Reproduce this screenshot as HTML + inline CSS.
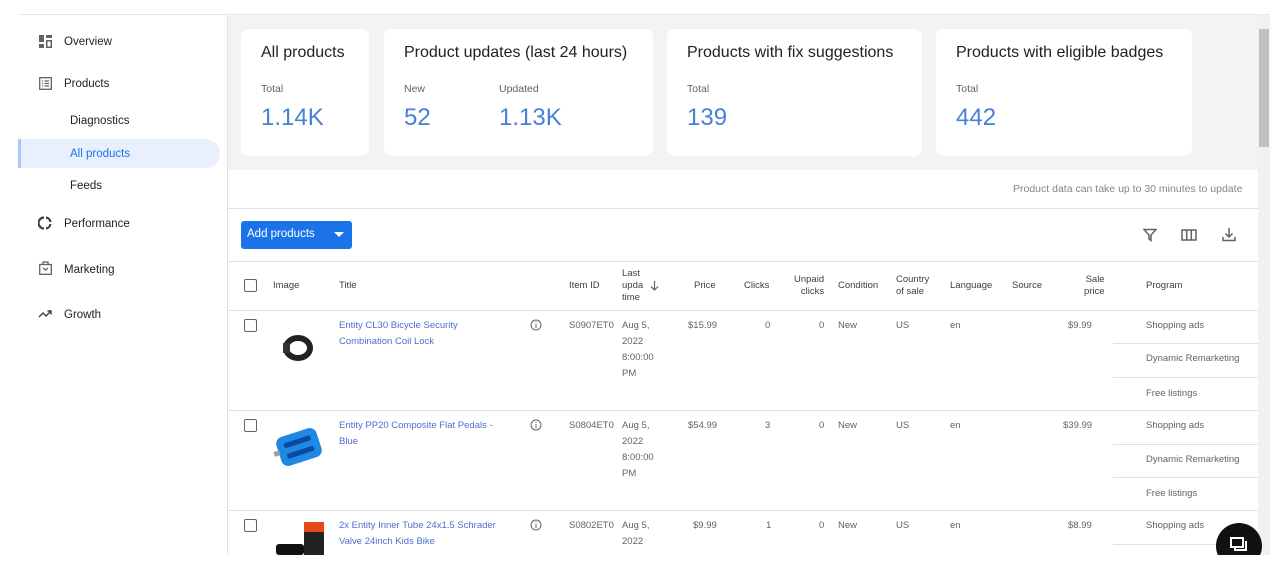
<!DOCTYPE html>
<html><head><style>
*{margin:0;padding:0;box-sizing:border-box}
body{width:1282px;height:575px;background:#fff;font-family:"Liberation Sans",Arial,sans-serif;color:#3c4043;position:relative;overflow:hidden}
.a{position:absolute}
.nav{font-size:11.5px;color:#202124}
.card{position:absolute;top:29px;height:127px;background:#fff;border-radius:8px}
.card .t{position:absolute;left:20px;top:15px;font-size:16px;color:#202124}
.card .l{position:absolute;top:54px;font-size:10.5px;color:#5f6368}
.card .v{position:absolute;top:75px;font-size:24px;color:#4a7fd6}
.th{position:absolute;font-size:9.5px;color:#3c4043;line-height:12px}
.td{position:absolute;font-size:9.5px;color:#5f6368;line-height:16px}
.lk{position:absolute;font-size:9.5px;color:#4c6fcf;line-height:16px}
.cb{position:absolute;left:244px;width:13px;height:13px;border:1.5px solid #5f6368;border-radius:2px}
.hl{position:absolute;height:1px;background:#e0e0e0}
</style></head><body>
<div class="a" style="left:18px;top:14px;width:1252px;height:1px;background:#e8e8e8"></div>
<!-- sidebar -->
<svg class="a" style="left:39px;top:35px" width="13" height="13" viewBox="0 0 13 13" fill="#5f6368"><rect x="0" y="0" width="5" height="7"/><rect x="7" y="0" width="6" height="3"/><rect x="7" y="5" width="6" height="8"/><rect x="0" y="9" width="5" height="4"/><rect x="8.5" y="6.5" width="3" height="5" fill="#fff"/></svg>
<div class="a nav" style="left:64px;top:36px">Overview</div>
<svg class="a" style="left:39px;top:77px" width="13" height="13" viewBox="0 0 13 13" fill="none" stroke="#5f6368" stroke-width="1.3"><rect x="0.7" y="0.7" width="11.6" height="11.6"/><path d="M3 4h1M3 6.5h1M3 9h1M5.5 4h4.5M5.5 6.5h4.5M5.5 9h4.5"/></svg>
<div class="a nav" style="left:64px;top:78px">Products</div>
<div class="a nav" style="left:70px;top:115px">Diagnostics</div>
<div class="a" style="left:18px;top:139px;width:202px;height:29px;background:#e8f0fe;border-radius:0 15px 15px 0;border-left:3px solid #a8c7fa"></div>
<div class="a nav" style="left:70px;top:148px;color:#1a73e8">All products</div>
<div class="a nav" style="left:70px;top:180px">Feeds</div>
<svg class="a" style="left:38px;top:216px" width="14" height="14" viewBox="0 0 14 14" fill="none" stroke="#3c4043" stroke-width="2.2"><path d="M6 1.5A5.5 5.5 0 0 0 6 12.5M8 1.5A5.5 5.5 0 0 1 12.5 6M12.5 8A5.5 5.5 0 0 1 8 12.5"/></svg>
<div class="a nav" style="left:64px;top:218px">Performance</div>
<svg class="a" style="left:39px;top:261px" width="13" height="14" viewBox="0 0 13 14" fill="none" stroke="#5f6368" stroke-width="1.3"><rect x="0.7" y="3.5" width="11.6" height="9.8"/><path d="M4 3.5V1h5v2.5M4 7l2.5 2L9 7"/></svg>
<div class="a nav" style="left:64px;top:264px">Marketing</div>
<svg class="a" style="left:38px;top:309px" width="14" height="10" viewBox="0 0 14 10" fill="none" stroke="#3c4043" stroke-width="1.4"><path d="M1 8l4-4 3 3 5-5M9.5 2H13v3.5"/></svg>
<div class="a nav" style="left:64px;top:309px">Growth</div>
<!-- main -->
<div class="a" style="left:228px;top:15px;width:1030px;height:155px;background:#f1f3f4"></div>
<div class="a" style="left:227px;top:15px;width:1px;height:540px;background:#e0e0e0"></div>
<div class="a" style="left:1258px;top:15px;width:12px;height:540px;background:#f1f1f1"></div>
<div class="a" style="left:1259px;top:29px;width:10px;height:118px;background:#c1c1c1"></div>
<div class="card" style="left:241px;width:128px"><div class="t">All products</div><div class="l" style="left:20px">Total</div><div class="v" style="left:20px">1.14K</div></div>
<div class="card" style="left:384px;width:269px"><div class="t">Product updates (last 24 hours)</div><div class="l" style="left:20px">New</div><div class="v" style="left:20px">52</div><div class="l" style="left:115px">Updated</div><div class="v" style="left:115px">1.13K</div></div>
<div class="card" style="left:667px;width:255px"><div class="t">Products with fix suggestions</div><div class="l" style="left:20px">Total</div><div class="v" style="left:20px">139</div></div>
<div class="card" style="left:936px;width:256px"><div class="t">Products with eligible badges</div><div class="l" style="left:20px">Total</div><div class="v" style="left:20px">442</div></div>
<div class="a" style="left:1013px;top:183px;font-size:10.5px;color:#80868b">Product data can take up to 30 minutes to update</div>
<div class="hl" style="left:228px;top:208px;width:1030px"></div>
<div class="a" style="left:241px;top:221px;width:111px;height:28px;background:#1a73e8;border-radius:3px;color:#fff;font-size:11.5px;padding:7px 0 0 6px">Add products</div>
<svg class="a" style="left:334px;top:232px" width="10" height="6"><path d="M0 0h10L5 5z" fill="#fff"/></svg>
<svg class="a" style="left:1143px;top:228px" width="14" height="14" fill="none" stroke="#5f6368" stroke-width="1.5"><path d="M1 1.5h12L8 7v5.5L6 11V7z"/></svg>
<svg class="a" style="left:1181px;top:229px" width="16" height="12" fill="none" stroke="#5f6368" stroke-width="1.5"><rect x="1" y="1" width="14" height="10"/><path d="M5.7 1v10M10.3 1v10"/></svg>
<svg class="a" style="left:1222px;top:227px" width="14" height="15" fill="none" stroke="#5f6368" stroke-width="1.5"><path d="M7 1v9M3.5 6.5L7 10l3.5-3.5M1 10v3.5h12V10"/></svg>
<div class="hl" style="left:228px;top:261px;width:1030px"></div>
<!-- header -->
<div class="cb" style="top:279px"></div>
<div class="th" style="left:273px;top:280px">Image</div>
<div class="th" style="left:339px;top:280px">Title</div>
<div class="th" style="left:569px;top:280px">Item ID</div>
<div class="th" style="left:622px;top:268px">Last<br>upda<br>time</div>
<svg class="a" style="left:650px;top:281px" width="9" height="10" fill="none" stroke="#5f6368" stroke-width="1.2"><path d="M4.5 0v9M1 5.5l3.5 3.5L8 5.5"/></svg>
<div class="th" style="left:694px;top:280px">Price</div>
<div class="th" style="left:744px;top:280px">Clicks</div>
<div class="th" style="left:794px;top:274px;text-align:right">Unpaid<br>clicks</div>
<div class="th" style="left:838px;top:280px">Condition</div>
<div class="th" style="left:896px;top:274px">Country<br>of sale</div>
<div class="th" style="left:950px;top:280px">Language</div>
<div class="th" style="left:1012px;top:280px">Source</div>
<div class="th" style="left:1084px;top:274px;text-align:right">Sale<br>price</div>
<div class="th" style="left:1146px;top:280px">Program</div>
<div class="hl" style="left:228px;top:310px;width:1030px"></div>
<!-- rows -->
<div class="cb" style="top:319px"></div>
<svg class="a" style="left:280px;top:331px" width="34" height="32"><ellipse cx="18" cy="17" rx="12" ry="10" fill="none" stroke="#222" stroke-width="6"/><rect x="3" y="12" width="7" height="10" fill="#333"/></svg>
<div class="lk" style="left:339px;top:318px">Entity CL30 Bicycle Security<br>Combination Coil Lock</div>
<div class="td" style="left:569px;top:318px">S0907ET0</div>
<div class="td" style="left:622px;top:318px">Aug 5,<br>2022<br>8:00:00<br>PM</div>
<div class="td" style="left:688px;top:318px">$15.99</div>
<div class="td" style="left:765px;top:318px">0</div>
<div class="td" style="left:819px;top:318px">0</div>
<div class="td" style="left:838px;top:318px">New</div>
<div class="td" style="left:896px;top:318px">US</div>
<div class="td" style="left:950px;top:318px">en</div>
<div class="td" style="left:1068px;top:318px">$9.99</div>
<div class="td" style="left:1146px;top:318px">Shopping ads</div>
<div class="hl" style="left:1113px;top:343px;width:145px"></div>
<div class="td" style="left:1146px;top:351px">Dynamic Remarketing</div>
<div class="hl" style="left:1113px;top:377px;width:145px"></div>
<div class="td" style="left:1146px;top:386px">Free listings</div>
<div class="hl" style="left:228px;top:410px;width:1030px"></div>

<div class="cb" style="top:419px"></div>
<svg class="a" style="left:273px;top:424px" width="52" height="46"><g transform="rotate(-18 26 23)"><rect x="5" y="8" width="42" height="30" rx="7" fill="#1e88e5"/><rect x="12" y="15" width="28" height="5" rx="2" fill="#0d47a1"/><rect x="12" y="26" width="28" height="5" rx="2" fill="#0d47a1"/><rect x="0" y="20" width="6" height="5" fill="#9e9e9e"/></g></svg>
<div class="lk" style="left:339px;top:418px">Entity PP20 Composite Flat Pedals -<br>Blue</div>
<div class="td" style="left:569px;top:418px">S0804ET0</div>
<div class="td" style="left:622px;top:418px">Aug 5,<br>2022<br>8:00:00<br>PM</div>
<div class="td" style="left:688px;top:418px">$54.99</div>
<div class="td" style="left:765px;top:418px">3</div>
<div class="td" style="left:819px;top:418px">0</div>
<div class="td" style="left:838px;top:418px">New</div>
<div class="td" style="left:896px;top:418px">US</div>
<div class="td" style="left:950px;top:418px">en</div>
<div class="td" style="left:1063px;top:418px">$39.99</div>
<div class="td" style="left:1146px;top:418px">Shopping ads</div>
<div class="hl" style="left:1113px;top:444px;width:145px"></div>
<div class="td" style="left:1146px;top:452px">Dynamic Remarketing</div>
<div class="hl" style="left:1113px;top:477px;width:145px"></div>
<div class="td" style="left:1146px;top:486px">Free listings</div>
<div class="hl" style="left:228px;top:510px;width:1030px"></div>

<div class="cb" style="top:519px"></div>
<svg class="a" style="left:276px;top:520px" width="50" height="35"><rect x="28" y="2" width="20" height="33" fill="#e64a19"/><rect x="28" y="12" width="20" height="23" fill="#222"/><rect x="0" y="24" width="28" height="11" rx="3" fill="#111"/></svg>
<div class="lk" style="left:339px;top:518px">2x Entity Inner Tube 24x1.5 Schrader<br>Valve 24inch Kids Bike</div>
<div class="td" style="left:569px;top:518px">S0802ET0</div>
<div class="td" style="left:622px;top:518px">Aug 5,<br>2022</div>
<div class="td" style="left:693px;top:518px">$9.99</div>
<div class="td" style="left:766px;top:518px">1</div>
<div class="td" style="left:819px;top:518px">0</div>
<div class="td" style="left:838px;top:518px">New</div>
<div class="td" style="left:896px;top:518px">US</div>
<div class="td" style="left:950px;top:518px">en</div>
<div class="td" style="left:1068px;top:518px">$8.99</div>
<div class="td" style="left:1146px;top:518px">Shopping ads</div>
<div class="hl" style="left:1113px;top:544px;width:145px"></div>
<!-- info icons -->
<svg class="a" style="left:530px;top:319px" width="12" height="12" fill="none" stroke="#5f6368" stroke-width="1"><circle cx="6" cy="6" r="5"/><path d="M6 5v4M6 3v1"/></svg>
<svg class="a" style="left:530px;top:419px" width="12" height="12" fill="none" stroke="#5f6368" stroke-width="1"><circle cx="6" cy="6" r="5"/><path d="M6 5v4M6 3v1"/></svg>
<svg class="a" style="left:530px;top:519px" width="12" height="12" fill="none" stroke="#5f6368" stroke-width="1"><circle cx="6" cy="6" r="5"/><path d="M6 5v4M6 3v1"/></svg>
<div class="a" style="left:0;top:555px;width:1282px;height:20px;background:#fff"></div>
<div class="a" style="left:1216px;top:523px;width:46px;height:46px;border-radius:50%;background:#111;clip-path:inset(0 0 14px 0)"></div>
<svg class="a" style="left:1230px;top:537px" width="18" height="18" fill="none" stroke="#fff" stroke-width="2"><path d="M1 1h12v9H1zM5 10v3h11V4"/></svg>
</body></html>
